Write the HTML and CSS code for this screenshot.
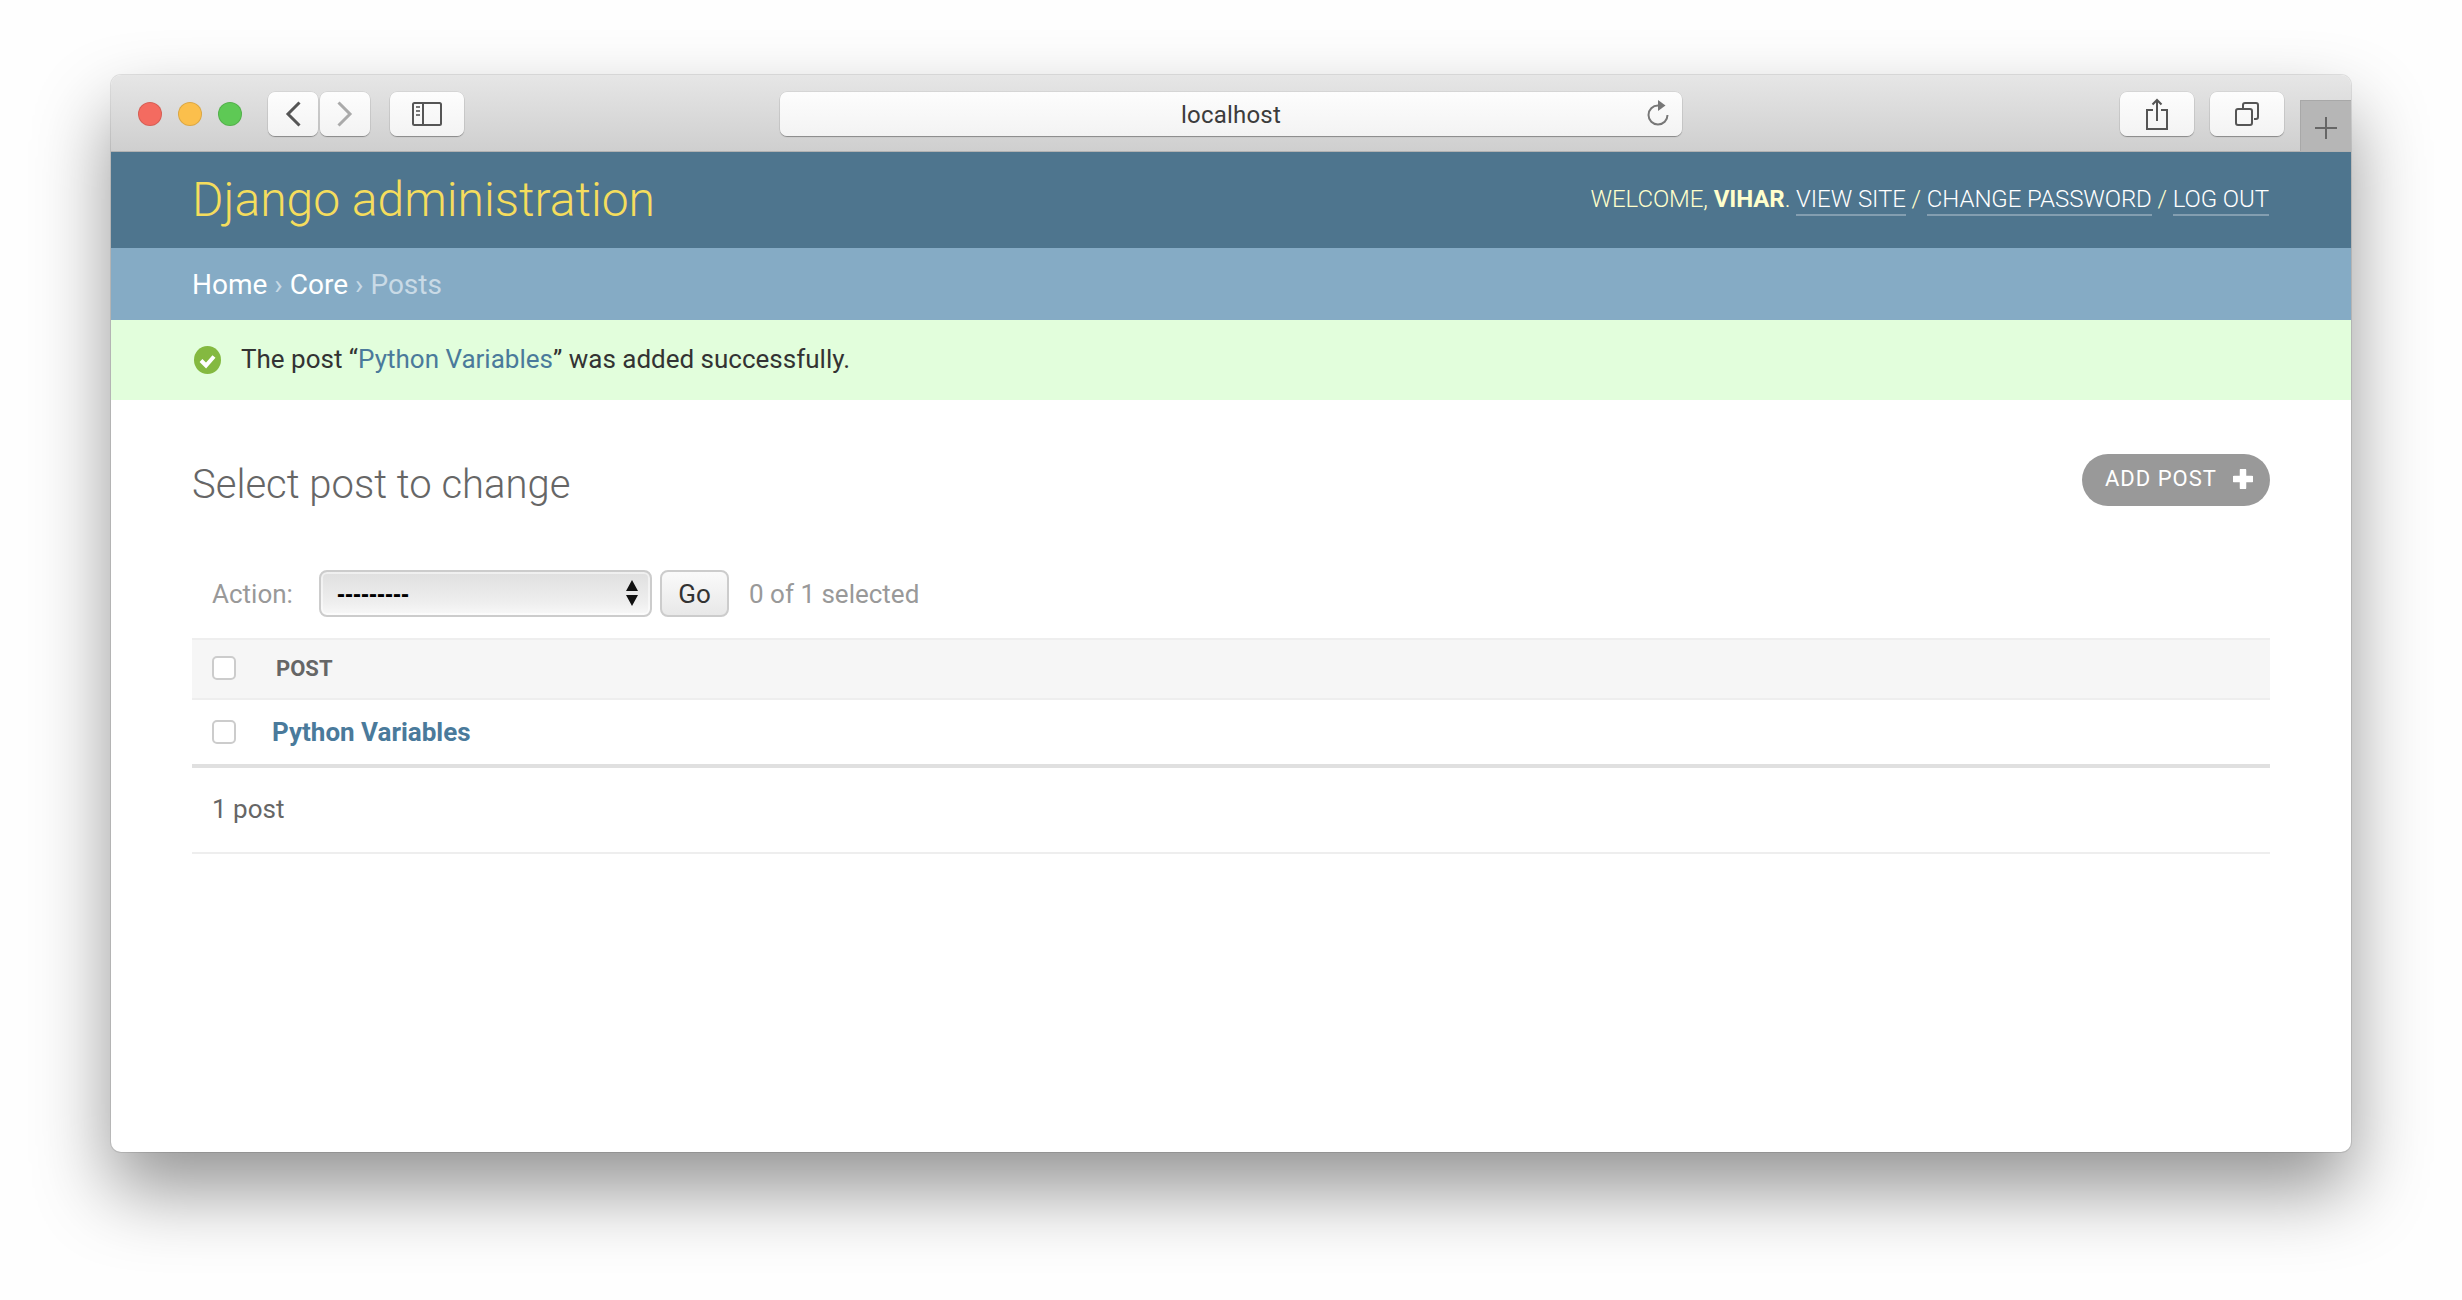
FILE: index.html
```html
<!DOCTYPE html>
<html lang="en">
<head>
<meta charset="utf-8">
<title>Select post to change</title>
<link rel="stylesheet" href="styles.css">
</head>
<body>
<div class="window">
  <div class="toolbar">
    <div class="lights">
      <span class="light red"></span><span class="light yellow"></span><span class="light green"></span>
    </div>
    <div class="nav">
      <span class="tb tb-nav"><svg width="16" height="26" viewBox="0 0 16 26"><path d="M14.500 1.500 3 13l11.500 11.500" fill="none" stroke="#555" stroke-width="3"/></svg></span>
      <span class="tb tb-nav"><svg width="16" height="26" viewBox="0 0 16 26"><path d="M1.500 1.500 13 13 1.500 24.500" fill="none" stroke="#aaa" stroke-width="3"/></svg></span>
    </div>
    <span class="tb tb-side"><svg width="30" height="24" viewBox="0 0 30 24"><rect x="1" y="1" width="28" height="22" rx="1.500" fill="none" stroke="#555" stroke-width="2"/><path d="M11 1v22" stroke="#555" stroke-width="2"/><path d="M4 5h4M4 9h4M4 13h4" stroke="#777" stroke-width="2"/></svg></span>
    <div class="url">
      <span class="url-text">localhost</span>
      <svg class="reload" width="24" height="28" viewBox="0 0 24 28"><path d="M12 6.500a9.500 9.500 0 1 0 9.500 9.500" fill="none" stroke="#777" stroke-width="2"/><path d="M12 1l7.500 5.500L12 12z" fill="#777"/></svg>
    </div>
    <span class="tb tb-right tb-share"><svg width="24" height="32" viewBox="0 0 24 32"><path d="M8 12H2v19h20V12h-6" fill="none" stroke="#555" stroke-width="2"/><path d="M12 23V2M7.500 6.500 12 2l4.500 4.500" fill="none" stroke="#555" stroke-width="2"/></svg></span>
    <span class="tb tb-right"><svg width="24" height="24" viewBox="0 0 24 24"><rect x="1" y="7" width="16" height="16" rx="2" fill="none" stroke="#555" stroke-width="2"/><path d="M8 6V3a2 2 0 0 1 2-2h11a2 2 0 0 1 2 2v12a2 2 0 0 1-2 2h-2" fill="none" stroke="#555" stroke-width="2"/></svg></span>
    <span class="newtab"><svg width="22" height="22" viewBox="0 0 22 22"><path d="M11 0v22M0 11h22" stroke="#666" stroke-width="2"/></svg></span>
  </div>
  <header class="site-header">
    <h1 class="branding">Django administration</h1>
    <div class="user-tools">WELCOME, <strong>VIHAR</strong>. <a href="#">VIEW SITE</a> / <a href="#">CHANGE PASSWORD</a> / <a href="#">LOG OUT</a></div>
  </header>
  <nav class="breadcrumbs"><a href="#">Home</a> › <a href="#">Core</a> › Posts</nav>
  <div class="message">
    <svg width="27" height="28" viewBox="0 0 27 28"><ellipse cx="13.500" cy="14" rx="13.500" ry="14" fill="#84b940"/><path d="M7 14.500l5 5 8-9" fill="none" stroke="#fff" stroke-width="4"/></svg>
    <span>The post “<a href="#">Python Variables</a>” was added successfully.</span>
  </div>
  <main class="content">
    <div class="title-row">
      <h2 class="page-title">Select post to change</h2>
      <a class="add-btn" href="#">ADD POST<svg width="20" height="20" viewBox="0 0 20 20"><path d="M10 1.500v17M1.500 10h17" stroke="#fff" stroke-width="6.500" stroke-linecap="round"/></svg></a>
    </div>
    <div class="actions">
      <label class="action-label">Action:</label>
      <span class="select-wrap">
        <select class="select"><option>---------</option></select>
        <svg class="select-arrows" width="14" height="26" viewBox="0 0 14 26"><path d="M7 0l6 11H1zM1 15h12L7 26z" fill="#111"/></svg>
      </span>
      <button class="go" type="button">Go</button>
      <span class="counter">0 of 1 selected</span>
    </div>
    <div class="table">
      <div class="thead">
        <input class="check" type="checkbox">
        <span class="col-head">POST</span>
      </div>
      <div class="row">
        <input class="check check-row" type="checkbox">
        <a class="row-link" href="#">Python Variables</a>
      </div>
    </div>
    <p class="paginator">1 post</p>
  </main>
</div>
</body>
</html>
```
FILE: styles.css
```css
* { box-sizing: border-box; }
html, body { margin: 0; height: 100%; }
body {
  background: #fefefe;
  padding: 75px 111px 0;
  font-family: Roboto, "Liberation Sans", sans-serif;
  overflow: hidden;
}
.window {
  width: 2240px;
  height: 1077px;
  background: #fff;
  border-radius: 10px;
  box-shadow: 0 0 0 1px rgba(0,0,0,.1), 0 38px 76px rgba(0,0,0,.42);
  overflow: hidden;
  display: flex;
  flex-direction: column;
}
.toolbar {
  height: 77px;
  flex: none;
  position: relative;
  display: flex;
  align-items: flex-start;
  padding: 17px 0 0 27px;
  background: linear-gradient(#e6e6e6, #cfcfcf);
  border-bottom: 1px solid #b2b2b2;
}
.lights { display: flex; gap: 16px; margin-top: 10px; }
.light { width: 24px; height: 24px; border-radius: 50%; border: 1px solid rgba(0,0,0,.12); }
.red { background: #f46b60; }
.yellow { background: #fbbf4c; }
.green { background: #5ec955; }
.tb {
  height: 44px;
  display: flex;
  align-items: center;
  justify-content: center;
  background: linear-gradient(#fdfdfd, #f3f3f3);
  border-radius: 7px;
  box-shadow: 0 1px 1px rgba(0,0,0,.32), 0 0 0 .5px rgba(0,0,0,.1);
}
.nav { display: flex; gap: 2px; margin-left: 26px; }
.tb-nav { width: 50px; }
.tb-side { width: 74px; margin-left: 20px; }
.url {
  width: 902px;
  height: 44px;
  margin-left: 316px;
  padding-top: 2px;
  display: flex;
  align-items: center;
  justify-content: center;
  position: relative;
  background: linear-gradient(#fdfdfd, #f3f3f3);
  border-radius: 7px;
  box-shadow: 0 1px 1px rgba(0,0,0,.32), 0 0 0 .5px rgba(0,0,0,.1);
}
.url-text { font-size: 24px; letter-spacing: .2px; color: #3c3c3c; }
.reload { position: absolute; right: 12px; top: 7px; }
.tb-right { width: 74px; }
.tb-share { margin-left: 438px; margin-right: 16px; }
.newtab {
  position: absolute;
  right: 0;
  top: 25px;
  width: 51px;
  height: 51px;
  padding-top: 3px;
  background: #b6b6b6;
  border-top: 1px solid #a8a8a8;
  border-left: 1px solid #a8a8a8;
  display: flex;
  align-items: center;
  justify-content: center;
}
.site-header {
  height: 96px;
  flex: none;
  background: #4e758e;
  display: flex;
  align-items: center;
  justify-content: space-between;
  padding: 0 82px 2px 81px;
}
.branding {
  margin: 0;
  font-size: 48px;
  font-weight: 300;
  color: #f5dd5d;
}
.user-tools {
  font-size: 24px;
  font-weight: 300;
  letter-spacing: -.08px;
  color: #ffc;
}
.user-tools strong { font-weight: 700; }
.user-tools a {
  color: #fff;
  text-decoration: none;
  border-bottom: 2px solid rgba(255,255,255,.3);
  padding-bottom: 1px;
}
.breadcrumbs {
  height: 72px;
  flex: none;
  background: #85abc5;
  display: flex;
  align-items: center;
  gap: 7px;
  padding: 0 81px;
  font-size: 28px;
  font-weight: 400;
  color: #c9dae6;
}
.breadcrumbs a { color: #fff; text-decoration: none; font-weight: 400; }
.message {
  height: 80px;
  flex: none;
  background: #e2fedc;
  display: flex;
  align-items: center;
  gap: 20px;
  padding: 0 81px 2px 83px;
  font-size: 26px;
  color: #333;
}
.message svg { margin-top: 2px; }
.message a { color: #4a7a9b; text-decoration: none; }
.content { flex: 1; padding: 54px 81px 0; }
.title-row { display: flex; justify-content: space-between; align-items: flex-start; }
.page-title {
  margin: 0;
  padding-top: 3px;
  font-size: 40px;
  font-weight: 300;
  line-height: 56px;
  color: #666;
}
.add-btn {
  height: 52px;
  width: 188px;
  padding: 0 0 3px 23px;
  display: flex;
  align-items: center;
  gap: 16px;
  background: #999;
  border-radius: 26px;
  color: #fff;
  font-size: 22px;
  letter-spacing: 1px;
  text-decoration: none;
}
.actions {
  display: flex;
  align-items: center;
  margin-top: 57px;
  padding-left: 20px;
  height: 47px;
  font-size: 26px;
  font-weight: 400;
  color: #999;
}
.action-label { width: 107px; }
.select-wrap { position: relative; display: block; width: 333px; height: 47px; }
.select {
  appearance: none;
  width: 100%;
  height: 100%;
  padding: 0 16px;
  border: 2px solid #ccc;
  border-radius: 8px;
  background: linear-gradient(#dfdfdf, #eee 70%, #f8f8f8);
  box-shadow: inset 0 0 0 2px rgba(255,255,255,.5);
  font-family: "Liberation Sans", sans-serif;
  font-size: 24px;
  font-weight: 700;
  color: #000;
}
.select-arrows { position: absolute; right: 13px; top: 10px; }
.go {
  width: 69px;
  height: 47px;
  margin-left: 8px;
  border: 2px solid #ccc;
  border-radius: 8px;
  background: linear-gradient(#fafafa, #e8e8e8);
  font-family: Roboto, sans-serif;
  font-size: 26px;
  color: #333;
  padding: 0;
}
.counter { margin-left: 20px; }
.table { margin-top: 21px; }
.thead {
  height: 62px;
  display: flex;
  align-items: center;
  padding-left: 20px;
  background: #f6f6f6;
  border-top: 2px solid #eee;
  border-bottom: 2px solid #eee;
}
.row {
  height: 68px;
  display: flex;
  align-items: center;
  padding: 0 20px;
  border-bottom: 4px solid #e0e0e0;
}
.check {
  appearance: none;
  flex: none;
  width: 24px;
  height: 24px;
  margin: 0 0 2px;
  background: #fff;
  border: 2px solid #ccc;
  border-radius: 5px;
}
.check-row { margin: 0; }
.col-head { margin: 0 0 2px 40px; font-size: 22px; font-weight: 700; color: #666; }
.row-link { margin-left: 36px; font-size: 26px; font-weight: 700; color: #4a7a9b; text-decoration: none; }
.paginator {
  margin: 0;
  height: 86px;
  display: flex;
  align-items: center;
  padding: 0 0 3px 20px;
  font-size: 26px;
  color: #666;
  border-bottom: 2px solid #eee;
}
```
